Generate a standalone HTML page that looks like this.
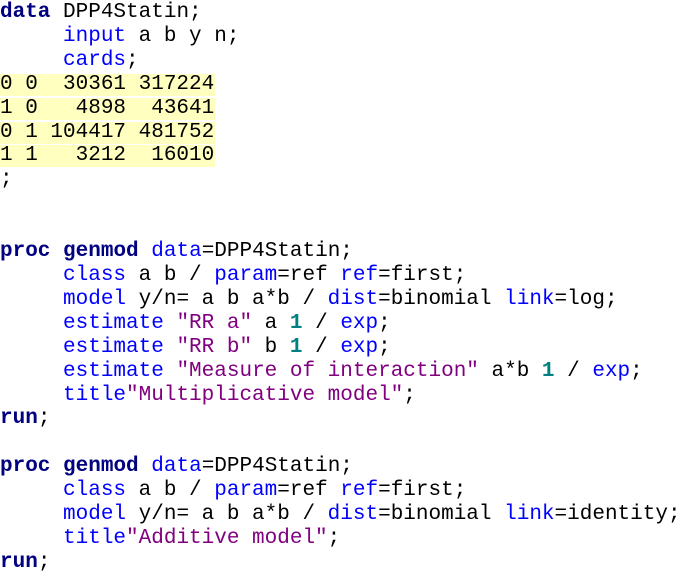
<!DOCTYPE html>
<html><head><style>
html,body{margin:0;padding:0;background:#fff;width:685px;height:573px;overflow:hidden}
pre{margin:0;padding:1px 0 0 0;font-family:"Liberation Mono",monospace;font-size:21px;line-height:23.9px;color:#000;letter-spacing:0}
.k{color:#000080;font-weight:bold}
.b{color:#0000ff}
.s{color:#800080}
.n{color:#008080;font-weight:bold}
.y{background:#ffffc0;display:inline-block;width:215px;height:22px;line-height:22px;vertical-align:top;margin-top:1px}
</style></head><body><pre><span class="k">data</span> DPP4Statin;
     <span class="b">input</span> a b y n;
     <span class="b">cards</span>;
<span class="y">0 0  30361 317224</span>
<span class="y">1 0   4898  43641</span>
<span class="y">0 1 104417 481752</span>
<span class="y">1 1   3212  16010</span>
;


<span class="k">proc</span> <span class="k">genmod</span> <span class="b">data</span>=DPP4Statin;
     <span class="b">class</span> a b / <span class="b">param</span>=ref <span class="b">ref</span>=first;
     <span class="b">model</span> y/n= a b a*b / <span class="b">dist</span>=binomial <span class="b">link</span>=log;
     <span class="b">estimate</span> <span class="s">"RR a"</span> a <span class="n">1</span> / <span class="b">exp</span>;
     <span class="b">estimate</span> <span class="s">"RR b"</span> b <span class="n">1</span> / <span class="b">exp</span>;
     <span class="b">estimate</span> <span class="s">"Measure of interaction"</span> a*b <span class="n">1</span> / <span class="b">exp</span>;
     <span class="b">title</span><span class="s">"Multiplicative model"</span>;
<span class="k">run</span>;

<span class="k">proc</span> <span class="k">genmod</span> <span class="b">data</span>=DPP4Statin;
     <span class="b">class</span> a b / <span class="b">param</span>=ref <span class="b">ref</span>=first;
     <span class="b">model</span> y/n= a b a*b / <span class="b">dist</span>=binomial <span class="b">link</span>=identity;
     <span class="b">title</span><span class="s">"Additive model"</span>;
<span class="k">run</span>;
</pre></body></html>
